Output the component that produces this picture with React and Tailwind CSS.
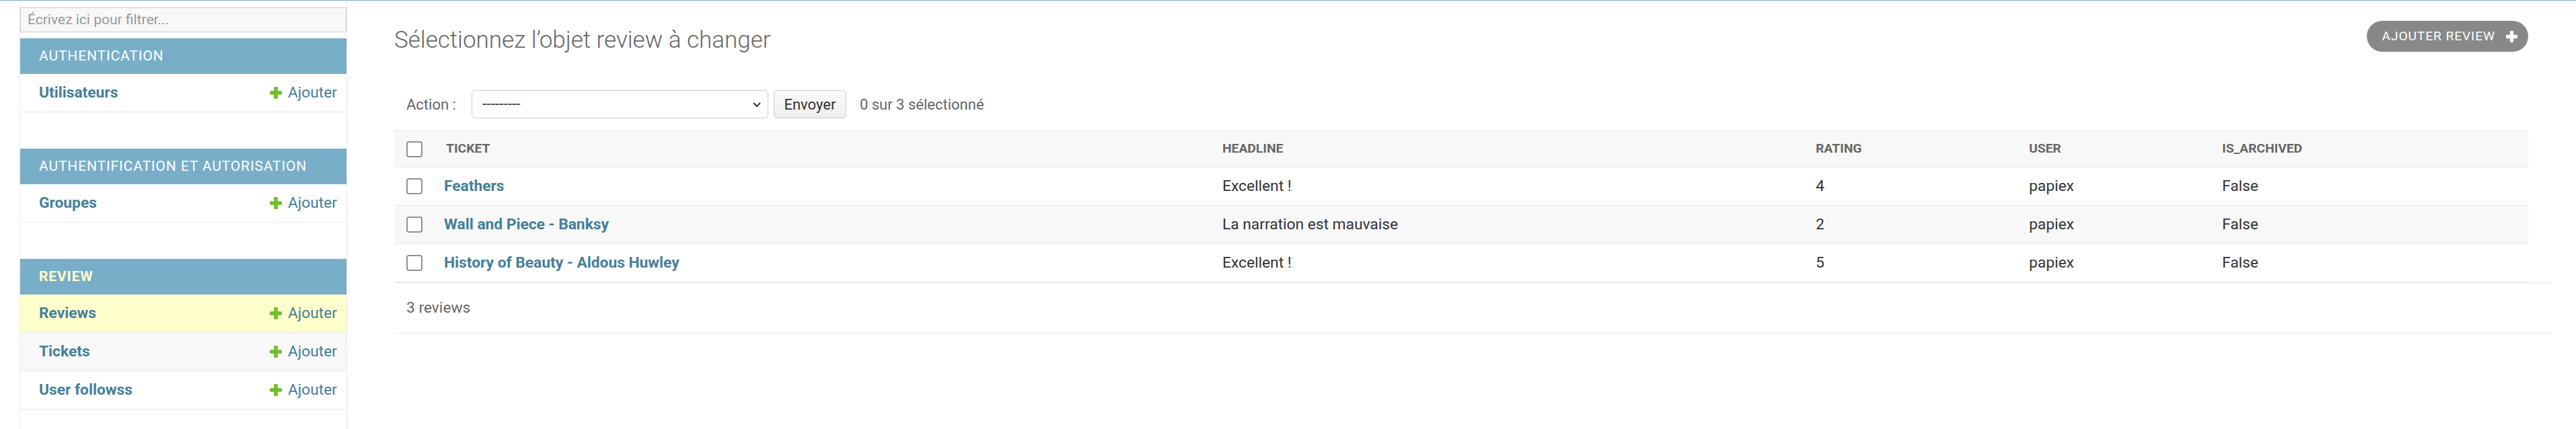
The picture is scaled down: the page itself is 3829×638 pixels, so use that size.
import React from "react";

// green / white plus used by the "add" links
const PlusIcon = ({ className }) => (
  <svg viewBox="0 0 16 16" className={className} fill="currentColor">
    <rect x="5.5" y="0" width="5" height="16" rx="1.2" />
    <rect x="0" y="5.5" width="16" height="5" rx="1.2" />
  </svg>
);

const Checkbox = () => (
  <div className="w-[24px] h-[24px] rounded-[4px] border-2 border-[#8f8f9d] bg-white" />
);

const sidebarApps = [
  {
    name: "Authentication",
    models: [{ name: "Utilisateurs" }],
  },
  {
    name: "Authentification et autorisation",
    models: [{ name: "Groupes" }],
  },
  {
    name: "Review",
    current: true,
    models: [
      { name: "Reviews", current: true },
      { name: "Tickets" },
      { name: "User followss" },
    ],
  },
];

const reviews = [
  { ticket: "Feathers", headline: "Excellent !", rating: 4, user: "papiex", archived: "False" },
  { ticket: "Wall and Piece - Banksy", headline: "La narration est mauvaise", rating: 2, user: "papiex", archived: "False" },
  { ticket: "History of Beauty - Aldous Huwley", headline: "Excellent !", rating: 5, user: "papiex", archived: "False" },
];

const cols = "grid grid-cols-[74px_1157px_882px_317px_287px_1fr]";

const Sidebar = () => (
  <div className="w-[486px] shrink-0 border-r border-[#e8e8e8] pt-[10px]">
    <div className="h-[37px] border border-[#ccc] bg-[#f8f8f8] flex items-center pl-[10px] text-[21px] text-[#999]">
      Écrivez ici pour filtrer...
    </div>
    <div className="mt-[9px] flex flex-col gap-[54px]">
      {sidebarApps.map((app) => (
        <div key={app.name}>
          <div
            className={`h-[53px] bg-[#79aec8] flex items-center pl-[28px] text-[21px] uppercase tracking-[0.875px] ${
              app.current ? "text-[#ffc] font-bold" : "text-white"
            }`}
          >
            {app.name}
          </div>
          {app.models.map((m, i) => (
            <div
              key={m.name}
              className={`h-[57px] border-b border-[#e8e8e8] flex items-center justify-between pl-[28px] pr-[14px] ${
                m.current ? "bg-[#ffc]" : i % 2 === 1 ? "bg-[#f8f8f8]" : "bg-white"
              }`}
            >
              <span className="text-[22.75px] font-bold text-[#447e9b]">{m.name}</span>
              <span className="flex items-center gap-[9px] text-[22.75px] text-[#447e9b]">
                <PlusIcon className="w-[18px] h-[18px] text-[#70bf2b]" />
                Ajouter
              </span>
            </div>
          ))}
        </div>
      ))}
    </div>
  </div>
);

const App = () => {
  return (
    <div className="min-h-[638px] w-full border-t border-[#79aec8] bg-white font-[Roboto,sans-serif] flex">
      {/* collapsed sidebar toggle */}
      <div className="w-[30px] shrink-0 border-r border-[#e8e8e8]" />

      <Sidebar />

      {/* Content */}
      <div className="flex-1 pl-[70px] pr-[71px] pt-[30px]">
        <div className="flex justify-between items-start">
          <h1 className="mt-[8px] text-[35px] leading-[42px] font-light text-[#666]">
            Sélectionnez l’objet review à changer
          </h1>
          <button className="h-[46px] rounded-full bg-[#888] text-white flex items-center pl-[22px] pr-[16px] gap-[16px] text-[19.25px] uppercase tracking-[0.875px]">
            Ajouter review
            <PlusIcon className="w-[17px] h-[17px]" />
          </button>
        </div>

        {/* Actions */}
        <div className="mt-[53px] h-[42px] flex items-center text-[22px]">
          <span className="ml-[18px] text-[#666]">Action :</span>
          <div className="ml-[23px] w-[441px] h-[42px] rounded-[5px] border border-[#ccc] bg-white flex items-center justify-between pl-[15px] pr-[8px]">
            <span className="text-[22.75px] text-[#333]">---------</span>
            <svg viewBox="0 0 16 16" className="w-[16px] h-[16px] text-[#333]" fill="none" stroke="currentColor" strokeWidth="2">
              <path d="M3 6l5 5 5-5" />
            </svg>
          </div>
          <button className="ml-[8px] w-[108px] h-[42px] rounded-[5px] border border-[#ccc] bg-gradient-to-b from-[#fafafa] to-[#eee] text-[#333] text-[22px]">
            Envoyer
          </button>
          <span className="ml-[20px] text-[#666]">0 sur 3 sélectionné</span>
        </div>

        {/* Results table */}
        <div className="mt-[18px]">
          <div className={`${cols} h-[55px] items-center bg-[#f8f8f8] border-y border-[#e8e8e8] text-[19.25px] font-bold uppercase text-[#666]`}>
            <div className="pl-[18px]">
              <Checkbox />
            </div>
            <div className="pl-[3px]">Ticket</div>
            <div>Headline</div>
            <div>Rating</div>
            <div>User</div>
            <div>Is_archived</div>
          </div>
          {reviews.map((r, i) => (
            <div
              key={r.ticket}
              className={`${cols} h-[57px] items-center border-b border-[#e8e8e8] text-[22.75px] text-[#333] ${
                i % 2 === 1 ? "bg-[#f8f8f8]" : "bg-white"
              }`}
            >
              <div className="pl-[18px]">
                <Checkbox />
              </div>
              <div className="font-bold text-[#447e9b]">{r.ticket}</div>
              <div>{r.headline}</div>
              <div>{r.rating}</div>
              <div>{r.user}</div>
              <div>{r.archived}</div>
            </div>
          ))}
          <div className="mr-[-35px] h-[76px] border-y border-[#e8e8e8] flex items-center pl-[18px] text-[22.75px] text-[#666]">
            3 reviews
          </div>
        </div>
      </div>
    </div>
  );
};

export default App;
